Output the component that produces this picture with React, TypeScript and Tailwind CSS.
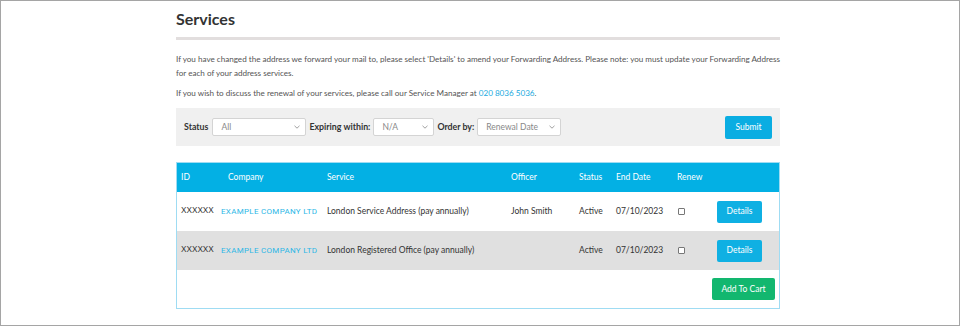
import React from "react";

const Select = ({ w, value }: { w: string; value: string }) => (
  <div className={`${w} h-[18px] bg-white border border-[#d4d4d4] rounded-[2px] flex items-center justify-between pl-[8px] pr-[5px] text-[8.5px] text-[#888]`}>
    <span>{value}</span>
    <svg width="6" height="4" viewBox="0 0 6 4"><path d="M0.5 0.8 L3 3.2 L5.5 0.8" fill="none" stroke="#888" strokeWidth="0.8" /></svg>
  </div>
);

const Row = ({ bg, service, officer }: { bg: string; service: string; officer: string }) => (
  <div className={`${bg} h-[39px] flex items-center text-[8.5px] text-[#333]`}>
    <div className="w-[44px] pl-[4px] font-['Liberation_Sans',sans-serif] text-[8.2px]">XXXXXX</div>
    <div className="w-[106px] font-['Roboto',sans-serif] text-[8px] tracking-[0.3px] text-[#2cb7e6]">EXAMPLE COMPANY LTD</div>
    <div className="w-[184px]">{service}</div>
    <div className="w-[68px]">{officer}</div>
    <div className="w-[37px]">Active</div>
    <div className="w-[61px]">07/10/2023</div>
    <div className="w-[40px] flex items-center"><div className="ml-[1px] w-[7px] h-[7px] border border-[#777] rounded-[1px] bg-white" /></div>
    <div className="flex-1 flex">
      <div className="w-[45px] h-[22px] bg-[#0fb0e3] rounded-[2px] text-white flex items-center justify-center">Details</div>
    </div>
  </div>
);

export default function App() {
  return (
    <div className="w-[960px] h-[326px] border border-[#a5a5a5] bg-white font-['Lato',sans-serif] overflow-hidden">
      <div className="w-[604px] ml-[175px] pt-[8px]">
        <h1 className="text-[16px] font-bold text-[#333] leading-[20px]">Services</h1>
        <div className="mt-[8px] h-[3px] bg-[#e2dede]" />
        <p className="mt-[12px] text-[8.1px] leading-[14px] text-[#555]">
          If you have changed the address we forward your mail to, please select 'Details' to amend your Forwarding Address. Please note: you must update your Forwarding Address for each of your address services.
        </p>
        <p className="mt-[6px] text-[8.1px] leading-[14px] text-[#555]">
          If you wish to discuss the renewal of your services, please call our Service Manager at <span className="text-[#1aa9de]">020 8036 5036</span>.
        </p>
        <div className="mt-[8px] h-[38px] bg-[#f0f0f0] flex items-center pl-[8px] pr-[8px] text-[8.8px] text-[#333]">
          <span className="font-bold mr-[4px]">Status</span>
          <Select w="w-[94px]" value="All" />
          <span className="font-bold ml-[3px] mr-[3px]">Expiring within:</span>
          <Select w="w-[61px]" value="N/A" />
          <span className="font-bold ml-[3px] mr-[3px]">Order by:</span>
          <Select w="w-[84px]" value="Renewal Date" />
          <div className="ml-auto w-[47px] h-[23px] bg-[#0aade2] rounded-[2px] text-white text-[8.5px] flex items-center justify-center">Submit</div>
        </div>
        <div className="mt-[16px] border border-[#9fdcf3]">
          <div className="h-[29px] bg-[#03b0e4] flex items-center text-[8.5px] text-white">
            <div className="w-[51px] pl-[4px]">ID</div>
            <div className="w-[99px]">Company</div>
            <div className="w-[184px]">Service</div>
            <div className="w-[68px]">Officer</div>
            <div className="w-[37px]">Status</div>
            <div className="w-[61px]">End Date</div>
            <div className="w-[40px]">Renew</div>
          </div>
          <Row bg="bg-white" service="London Service Address (pay annually)" officer="John Smith" />
          <Row bg="bg-[#e0e0e0]" service="London Registered Office (pay annually)" officer="" />
          <div className="h-[38px] flex items-center justify-end pr-[4px]">
            <div className="w-[63px] h-[22px] bg-[#12b76f] rounded-[2px] text-white text-[8.5px] flex items-center justify-center">Add To Cart</div>
          </div>
        </div>
      </div>
    </div>
  );
}
